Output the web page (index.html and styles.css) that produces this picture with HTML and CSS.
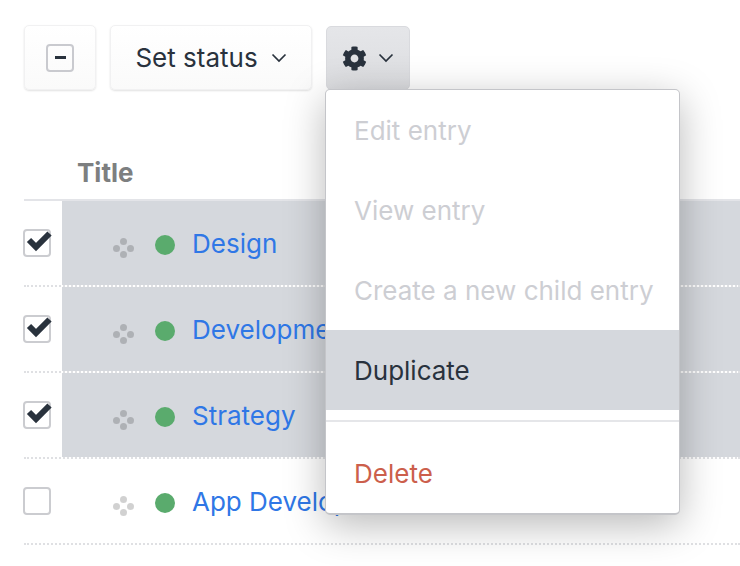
FILE: index.html
```html
<!DOCTYPE html>
<html lang="en">
<head>
  <meta charset="UTF-8" />
  <title>Entries</title>
  <link rel="stylesheet" href="styles.css">
</head>
<body>
  <div class="toolbar">
    <button class="btn btn-select"><span class="minus-box"><span class="minus"></span></span></button>
    <button class="btn btn-status">Set status
      <svg class="chevron" viewBox="0 0 16 10"><path d="M1.5 1.5 8 8l6.5-6.5"/></svg>
    </button>
    <div class="gear-wrap">
      <button class="btn btn-gear">
        <svg class="gear" viewBox="0 0 512 512"><path d="M487.4 315.7l-42.6-24.6c4.3-23.2 4.3-47 0-70.2l42.6-24.6c4.9-2.8 7.1-8.6 5.5-14-11.1-35.6-30-67.8-54.7-94.6-3.8-4.1-10-5.1-14.8-2.3L380.8 110c-17.9-15.4-38.5-27.3-60.8-35.1V25.8c0-5.6-3.9-10.5-9.4-11.7-36.7-8.2-74.3-7.8-109.2 0-5.5 1.2-9.4 6.1-9.4 11.7V75c-22.2 7.9-42.8 19.8-60.8 35.1L88.7 85.5c-4.9-2.8-11-1.9-14.8 2.3-24.7 26.7-43.6 58.9-54.7 94.6-1.7 5.4.6 11.2 5.5 14L67.3 221c-4.3 23.2-4.3 47 0 70.2l-42.6 24.6c-4.9 2.8-7.1 8.6-5.5 14 11.1 35.6 30 67.8 54.7 94.6 3.8 4.1 10 5.1 14.8 2.3l42.6-24.6c17.9 15.4 38.5 27.3 60.8 35.1v49.2c0 5.6 3.9 10.5 9.4 11.7 36.7 8.2 74.3 7.8 109.2 0 5.5-1.2 9.4-6.1 9.4-11.7v-49.2c22.2-7.9 42.8-19.8 60.8-35.1l42.6 24.6c4.9 2.8 11 1.9 14.8-2.3 24.7-26.7 43.6-58.9 54.7-94.6 1.5-5.5-.7-11.3-5.6-14.1zM256 336c-44.1 0-80-35.9-80-80s35.9-80 80-80 80 35.9 80 80-35.9 80-80 80z"/></svg>
        <svg class="chevron" viewBox="0 0 16 10"><path d="M1.5 1.5 8 8l6.5-6.5"/></svg>
      </button>
      <ul class="menu">
        <li class="menu-item disabled">Edit entry</li>
        <li class="menu-item disabled">View entry</li>
        <li class="menu-item disabled">Create a new child entry</li>
        <li class="menu-item active">Duplicate</li>
        <li class="menu-sep"></li>
        <li class="menu-item danger">Delete</li>
      </ul>
    </div>
  </div>

  <div class="head">Title</div>

  <div class="row selected">
    <span class="checkbox"><svg viewBox="0 0 30 24"><path d="M6 12l7 7L26.500 5.500"/></svg></span>
    <div class="cell">
      <span class="drag"><i></i><i></i><i></i><i></i></span>
      <span class="status"></span>
      <a class="title">Design</a>
    </div>
  </div>
  <div class="row selected">
    <span class="checkbox"><svg viewBox="0 0 30 24"><path d="M6 12l7 7L26.500 5.500"/></svg></span>
    <div class="cell">
      <span class="drag"><i></i><i></i><i></i><i></i></span>
      <span class="status"></span>
      <a class="title">Development</a>
    </div>
  </div>
  <div class="row selected">
    <span class="checkbox"><svg viewBox="0 0 30 24"><path d="M6 12l7 7L26.500 5.500"/></svg></span>
    <div class="cell">
      <span class="drag"><i></i><i></i><i></i><i></i></span>
      <span class="status"></span>
      <a class="title">Strategy</a>
    </div>
  </div>
  <div class="row">
    <span class="checkbox"></span>
    <div class="cell">
      <span class="drag"><i></i><i></i><i></i><i></i></span>
      <span class="status"></span>
      <a class="title">App Development</a>
    </div>
  </div>
</body>
</html>
```

FILE: styles.css
```css
html, body {
  height: 100%;
  overflow: hidden;
}

body {
  margin: 0;
  padding: 25px 0 0 24px;
  box-sizing: border-box;
  background: #fff;
  color: #29323d;
  font-family: Inter, "Liberation Sans", sans-serif;
  font-size: 26px;
}

/* toolbar */
.toolbar {
  display: flex;
  gap: 14px;
  height: 66px;
}

.btn {
  height: 65px;
  padding: 0;
  border: 1px solid #f1f1f2;
  border-radius: 5px;
  background: linear-gradient(#fff, #fafafa);
  box-shadow: 0 1px 2px rgba(0, 0, 0, 0.12);
  color: inherit;
  font: inherit;
  display: flex;
  align-items: center;
  justify-content: center;
}

.btn-select {
  width: 72px;
}

.minus-box {
  width: 24px;
  height: 24px;
  border: 2px solid #c9cacf;
  border-radius: 4px;
  display: flex;
  align-items: center;
  justify-content: center;
}

.minus {
  width: 11px;
  height: 3px;
  background: #29323d;
}

.btn-status {
  width: 202px;
  gap: 13px;
}

.chevron {
  width: 16px;
  height: 10px;
  fill: none;
  stroke: #29323d;
  stroke-width: 1.7;
}

.gear-wrap {
  position: relative;
}

.btn-gear {
  width: 84px;
  height: 64px;
  margin-top: 1px;
  gap: 11px;
  border-color: #d9dade;
  background: linear-gradient(#e5e6e9, #dcdde0);
  box-shadow: none;
}

.gear {
  width: 25px;
  height: 25px;
  fill: #29323d;
}

/* dropdown */
.menu {
  position: absolute;
  top: 64px;
  left: -1px;
  z-index: 10;
  width: 353px;
  margin: 0;
  padding: 0;
  list-style: none;
  background: #fff;
  border: 1px solid #c4c5c9;
  border-bottom-width: 2px;
  border-radius: 5px;
  overflow: hidden;
  box-shadow: 0 10px 40px rgba(0, 0, 0, 0.28);
}

.menu-item {
  height: 80px;
  padding-left: 28px;
  display: flex;
  align-items: center;
  white-space: nowrap;
}

.disabled {
  color: #cdced3;
}

.active {
  background: #d5d8dd;
}

.danger {
  color: #cc5f4c;
}

.menu-sep {
  height: 2px;
  margin: 10px 0 11px;
  background: #e5e6e9;
}

/* table */
.head {
  margin-top: 55px;
  height: 53px;
  padding-left: 53px;
  border-bottom: 2px solid #e3e4e8;
  color: #7d7f80;
  font-weight: 700;
  font-size: 26px;
  display: flex;
  align-items: center;
}

.row {
  position: relative;
  height: 84px;
  border-bottom: 2px dotted #dfe0e3;
  display: flex;
  align-items: center;
}

.checkbox {
  width: 24px;
  height: 24px;
  margin-left: -1px;
  border: 2px solid #cbccd0;
  border-radius: 4px;
  background: #fff;
  flex: none;
}

.checkbox svg {
  display: block;
  width: 30px;
  height: 24px;
  margin: -3px 0 0 -2px;
  fill: none;
  stroke: #29323d;
  stroke-width: 6;
}

.cell {
  flex: 1;
  align-self: stretch;
  margin-left: 11px;
  padding-left: 51px;
  display: flex;
  align-items: center;
}

.selected .cell {
  background: #d5d8dd;
}

.drag {
  position: relative;
  width: 21px;
  height: 20px;
  margin-top: 9px;
  flex: none;
}

.drag i {
  position: absolute;
  width: 7px;
  height: 7px;
  border-radius: 50%;
  background: rgba(0, 0, 0, 0.18);
}

.drag i:nth-child(1) { left: 7px; top: 0; }
.drag i:nth-child(2) { left: 0; top: 7px; }
.drag i:nth-child(3) { left: 14px; top: 7px; }
.drag i:nth-child(4) { left: 7px; top: 13px; }

.status {
  width: 20px;
  height: 20px;
  margin: 3px 0 0 21px;
  border-radius: 50%;
  background: #5aab6d;
  flex: none;
}

.title {
  margin-left: 17px;
  color: #2f77e6;
  white-space: nowrap;
}
```
